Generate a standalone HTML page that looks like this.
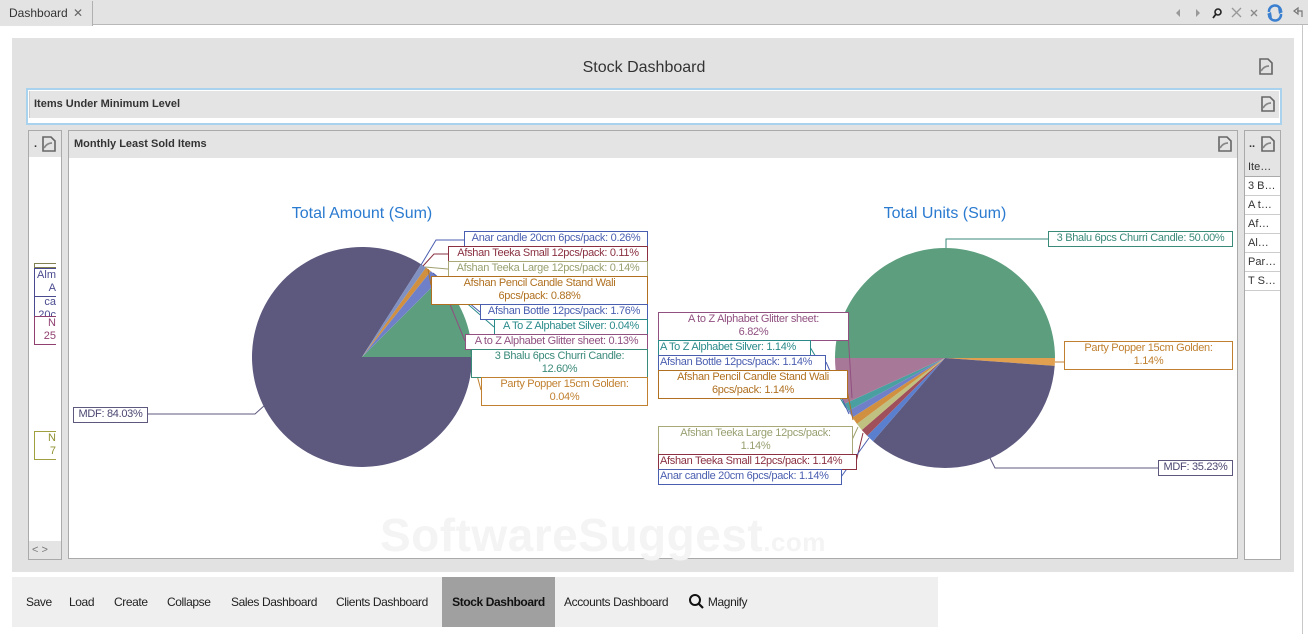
<!DOCTYPE html>
<html><head><meta charset="utf-8">
<style>
*{box-sizing:border-box;margin:0;padding:0}
body{width:1308px;height:634px;overflow:hidden;background:#fff;font-family:"Liberation Sans",sans-serif;position:relative}
.abs{position:absolute}
.lbl{position:absolute;background:#fff;border:1px solid;font-size:11px;line-height:13px;text-align:center;white-space:nowrap;overflow:hidden;padding:0 1px;letter-spacing:-0.3px}
.hdr{font-weight:bold;font-size:11px;color:#333}
.tb span{position:absolute;top:0;height:50px;line-height:50px;font-size:12px;color:#222;letter-spacing:-0.4px;white-space:nowrap}
</style></head><body>
<div class="abs" style="left:0;top:0;width:1308px;height:25px;background:#e3e3e3;border-bottom:1px solid #b8b8b8"></div>
<div class="abs" style="left:0;top:1px;width:93px;height:25px;background:#e3e3e3;border-right:1px solid #b0b0b0;font-size:12px;line-height:24px;padding-left:9px;color:#333;white-space:nowrap">Dashboard<span style="position:absolute;left:73px;top:0;color:#666;font-size:12px">✕</span></div>
<svg class="abs" style="left:1170px;top:4px" width="138" height="18">
<path d="M10 5 L6 9 L10 13Z" fill="#999"/><path d="M26 5 L30 9 L26 13Z" fill="#999"/>
<circle cx="48" cy="8" r="3" fill="none" stroke="#222" stroke-width="1.6"/><path d="M46 10 L43 14" stroke="#222" stroke-width="1.8"/>
<path d="M62 4 L71 13 M71 4 L62 13" stroke="#999" stroke-width="1.3"/>
<path d="M81 6 L87 12 M87 6 L81 12" stroke="#888" stroke-width="1.3"/>
<path d="M99 8 A6 6 0 0 1 111 7 M111 10 A6 6 0 0 1 99 11" fill="none" stroke="#3a7fd0" stroke-width="2.5"/><path d="M108 4 L113 8 L109 10Z M102 14 L97 10 L101 8Z" fill="#3a7fd0"/>
<path d="M124 7 L128 4 L128 10Z M127 7 L132 7 L132 13" fill="none" stroke="#777" stroke-width="1.2"/>
</svg>
<div class="abs" style="left:1302px;top:25px;width:1px;height:609px;background:#c8c8c8"></div>
<div class="abs" style="left:12px;top:38px;width:1282px;height:534px;background:#e2e2e2"></div>
<div class="abs" style="left:0;top:59px;width:1280px;text-align:center;font-size:16px;color:#333;padding-left:8px">Stock Dashboard</div>
<svg class="abs" style="left:1258px;top:58px" width="16" height="18"><path d="M2 1 H10 L14 5 V16 H2Z" fill="none" stroke="#666" stroke-width="1.6"/><path d="M3 13 Q6 8 11 8" stroke="#888" stroke-width="1.8" fill="none"/></svg>
<div class="abs" style="left:26px;top:88px;width:1256px;height:37px;border:2px solid #a9d2ee;background:#fff"></div>
<div class="abs" style="left:29px;top:91px;width:1250px;height:27px;background:#e4e4e4;border-left:1px solid #ccc"></div>
<div class="abs hdr" style="left:34px;top:98px">Items Under Minimum Level</div>
<svg class="abs" style="left:1260px;top:96px" width="16" height="16"><path d="M2 1 H10 L14 5 V15 H2Z" fill="none" stroke="#666" stroke-width="1.6"/><path d="M3 12 Q6 7 11 7" stroke="#888" stroke-width="1.8" fill="none"/></svg>
<div class="abs" style="left:28px;top:130px;width:34px;height:430px;border:1px solid #aaa;background:#fff"></div>
<div class="abs" style="left:29px;top:131px;width:32px;height:26px;background:#e4e4e4"></div>
<div class="abs hdr" style="left:34px;top:138px">.</div>
<svg class="abs" style="left:41px;top:136px" width="16" height="16"><path d="M2 1 H10 L14 5 V15 H2Z" fill="none" stroke="#666" stroke-width="1.6"/><path d="M3 12 Q6 7 11 7" stroke="#888" stroke-width="1.8" fill="none"/></svg>
<div class="abs" style="left:34px;top:268px;width:22px;height:29px;border:1px solid #4a4a90;border-right:none;font-size:11px;color:#4a4a90;overflow:hidden;text-align:right;line-height:13px">Alm<br>A</div>
<div class="abs" style="left:34px;top:263px;width:22px;height:5px;border:1px solid #808050;border-right:none"></div>
<div class="abs" style="left:34px;top:296px;width:22px;height:20px;border-left:1px solid #4a4a90;font-size:11px;color:#4a4a90;overflow:hidden;text-align:right;line-height:13px">ca<br>20c</div>
<div class="abs" style="left:34px;top:316px;width:22px;height:29px;border:1px solid #904070;border-right:none;font-size:11px;color:#904070;overflow:hidden;text-align:right;line-height:13px">N<br>25</div>
<div class="abs" style="left:34px;top:431px;width:22px;height:29px;border:1px solid #a0a040;border-right:none;font-size:11px;color:#909030;overflow:hidden;text-align:right;line-height:13px">N<br>7</div>
<div class="abs" style="left:29px;top:541px;width:32px;height:18px;background:#e4e4e4;font-size:11px;color:#777;line-height:18px;padding-left:3px">&lt; &gt;</div>
<div class="abs" style="left:1244px;top:130px;width:37px;height:430px;border:1px solid #aaa;background:#fff"></div>
<div class="abs" style="left:1245px;top:131px;width:35px;height:46px;background:#e4e4e4;border-bottom:1px solid #aaa"></div>
<div class="abs hdr" style="left:1249px;top:138px">..</div>
<svg class="abs" style="left:1260px;top:136px" width="16" height="16"><path d="M2 1 H10 L14 5 V15 H2Z" fill="none" stroke="#666" stroke-width="1.6"/><path d="M3 12 Q6 7 11 7" stroke="#888" stroke-width="1.8" fill="none"/></svg>
<div class="abs" style="left:1248px;top:161px;font-size:11px;color:#333">Ite…</div>
<div class="abs" style="left:1245px;top:177px;width:35px;font-size:11px;color:#333;line-height:18px">
<div style="border-bottom:1px solid #ccc;padding-left:3px;height:19px">3 B…</div>
<div style="border-bottom:1px solid #ccc;padding-left:3px;height:19px">A t…</div>
<div style="border-bottom:1px solid #ccc;padding-left:3px;height:19px">Af…</div>
<div style="border-bottom:1px solid #ccc;padding-left:3px;height:19px">Al…</div>
<div style="border-bottom:1px solid #ccc;padding-left:3px;height:19px">Par…</div>
<div style="border-bottom:1px solid #ccc;padding-left:3px;height:19px">T S…</div>
</div>
<div class="abs" style="left:68px;top:130px;width:1170px;height:429px;border:1px solid #aaa;background:#fff"></div>
<div class="abs" style="left:69px;top:131px;width:1168px;height:27px;background:#e4e4e4"></div>
<div class="abs hdr" style="left:74px;top:138px">Monthly Least Sold Items</div>
<svg class="abs" style="left:1217px;top:136px" width="16" height="16"><path d="M2 1 H10 L14 5 V15 H2Z" fill="none" stroke="#666" stroke-width="1.6"/><path d="M3 12 Q6 7 11 7" stroke="#888" stroke-width="1.8" fill="none"/></svg>
<div class="abs" style="left:380px;top:508px;font-size:46px;font-weight:bold;color:#f4f4f4;letter-spacing:0.5px;white-space:nowrap">SoftwareSuggest<span style="font-size:26px">.com</span></div>
<div class="abs" style="left:212px;top:205px;width:300px;text-align:center;font-size:16px;color:#2a7ad0">Total Amount (Sum)</div>
<div class="abs" style="left:795px;top:205px;width:300px;text-align:center;font-size:16px;color:#2a7ad0">Total Units (Sum)</div>
<svg class="abs" style="left:0;top:0" width="1308" height="634">
<path d="M362 357 L472 357 A110 110 0 1 1 421.1 264.2 Z" fill="#5c587e"/>
<path d="M362 357 L439.8 279.2 A110 110 0 0 1 472 357 Z" fill="#5c9e7e"/>
<path d="M362 357 L430.8 271.1 A110 110 0 0 1 439.8 279.2 Z" fill="#7080c8"/>
<path d="M362 357 L425.9 267.5 A110 110 0 0 1 430.8 271.1 Z" fill="#d09040"/>
<path d="M362 357 L421.1 264.2 A110 110 0 0 1 425.9 267.5 Z" fill="#8090c0"/>
<g fill="none" stroke-width="1">
<path d="M421 265 L436 240 L464 240" stroke="#4a5eb0"/>
<path d="M423 266 L434 254 L448 254" stroke="#8a3040"/>
<path d="M425 267 L448 269" stroke="#a0a070"/>
<path d="M428 269 L431 285" stroke="#b07020"/>
<path d="M433 273 L480 312" stroke="#4a5eb0"/>
<path d="M438 278 L494 327" stroke="#2a8a8a"/>
<path d="M440 280 L465 341" stroke="#905080"/>
<path d="M470 340 L472 362" stroke="#3a8a7a"/>
<path d="M472 357 L481 390" stroke="#c08030"/>
<path d="M147 414 L255 414 L265 405" stroke="#5c587e"/>
</g>
<path d="M945 358 L835 358 A110 110 0 0 1 1055 358 Z" fill="#5c9e7e"/>
<path d="M945 358 L1055 358 A110 110 0 0 1 1054.7 365.9 Z" fill="#e0a050"/>
<path d="M945 358 L1054.7 365.9 A110 110 0 0 1 873 441.2 Z" fill="#5c587e"/>
<path d="M945 358 L873 441.2 A110 110 0 0 1 867.2 435.8 Z" fill="#5b7fcf"/>
<path d="M945 358 L867.2 435.8 A110 110 0 0 1 861.8 430 Z" fill="#a0505a"/>
<path d="M945 358 L861.8 430 A110 110 0 0 1 856.9 423.9 Z" fill="#c0c080"/>
<path d="M945 358 L856.9 423.9 A110 110 0 0 1 852.5 417.4 Z" fill="#d09040"/>
<path d="M945 358 L852.5 417.4 A110 110 0 0 1 848.4 410.7 Z" fill="#7080c8"/>
<path d="M945 358 L848.4 410.7 A110 110 0 0 1 844.9 403.6 Z" fill="#4aa0a0"/>
<path d="M945 358 L844.9 403.6 A110 110 0 0 1 835 358 Z" fill="#a87898"/>
<g fill="none" stroke-width="1">
<path d="M946 248 L946 239 L1048 239" stroke="#3a8a7a"/>
<path d="M1055 362 L1064 362" stroke="#c08030"/>
<path d="M990 458 L995 468 L1158 468" stroke="#5c587e"/>
<path d="M848 332 L852 398" stroke="#905080"/>
<path d="M810 347 L846 408" stroke="#2a8a8a"/>
<path d="M826 362 L849 414" stroke="#4a5eb0"/>
<path d="M847 390 L853 420" stroke="#b07020"/>
<path d="M852 440 L858 427" stroke="#a0a070"/>
<path d="M856 462 L863 433" stroke="#8a3040"/>
<path d="M841 477 L869 438" stroke="#4a5eb0"/>
</g>
</svg>
<div class="lbl" style="left:464px;top:231px;width:184px;height:16px;border-color:#4a5eb0;color:#4a5eb0">Anar candle 20cm 6pcs/pack: 0.26%</div>
<div class="lbl" style="left:448px;top:246px;width:200px;height:16px;border-color:#8a3040;color:#8a3040">Afshan Teeka Small 12pcs/pack: 0.11%</div>
<div class="lbl" style="left:448px;top:261px;width:200px;height:16px;border-color:#a8a878;color:#98a070">Afshan Teeka Large 12pcs/pack: 0.14%</div>
<div class="lbl" style="left:431px;top:276px;width:217px;height:29px;border-color:#b07020;color:#b07020">Afshan Pencil Candle Stand Wali<br>6pcs/pack: 0.88%</div>
<div class="lbl" style="left:480px;top:304px;width:168px;height:16px;border-color:#4a5eb0;color:#4a5eb0">Afshan Bottle 12pcs/pack: 1.76%</div>
<div class="lbl" style="left:494px;top:319px;width:154px;height:16px;border-color:#2a8a8a;color:#2a8a8a">A To Z Alphabet Silver: 0.04%</div>
<div class="lbl" style="left:465px;top:334px;width:183px;height:16px;border-color:#905080;color:#905080">A to Z Alphabet Glitter sheet: 0.13%</div>
<div class="lbl" style="left:471px;top:349px;width:177px;height:29px;border-color:#3a8a7a;color:#3a8a7a">3 Bhalu 6pcs Churri Candle:<br>12.60%</div>
<div class="lbl" style="left:481px;top:377px;width:167px;height:29px;border-color:#c08030;color:#c08030">Party Popper 15cm Golden:<br>0.04%</div>
<div class="lbl" style="left:73px;top:407px;width:75px;height:16px;border-color:#5c587e;color:#4a4670">MDF: 84.03%</div>
<div class="lbl" style="left:1048px;top:231px;width:185px;height:16px;border-color:#3a8a7a;color:#3a8a7a">3 Bhalu 6pcs Churri Candle: 50.00%</div>
<div class="lbl" style="left:1064px;top:341px;width:169px;height:29px;border-color:#c08030;color:#c08030">Party Popper 15cm Golden:<br>1.14%</div>
<div class="lbl" style="left:658px;top:312px;width:191px;height:29px;border-color:#905080;color:#905080">A to Z Alphabet Glitter sheet:<br>6.82%</div>
<div class="lbl" style="left:658px;top:340px;width:153px;height:16px;border-color:#2a8a8a;color:#2a8a8a;text-align:left">A To Z Alphabet Silver: 1.14%</div>
<div class="lbl" style="left:658px;top:355px;width:168px;height:16px;border-color:#4a5eb0;color:#4a5eb0;text-align:left">Afshan Bottle 12pcs/pack: 1.14%</div>
<div class="lbl" style="left:658px;top:370px;width:190px;height:29px;border-color:#b07020;color:#b07020">Afshan Pencil Candle Stand Wali<br>6pcs/pack: 1.14%</div>
<div class="lbl" style="left:658px;top:426px;width:195px;height:29px;border-color:#a8a878;color:#98a070">Afshan Teeka Large 12pcs/pack:<br>1.14%</div>
<div class="lbl" style="left:658px;top:454px;width:199px;height:16px;border-color:#8a3040;color:#8a3040;text-align:left">Afshan Teeka Small 12pcs/pack: 1.14%</div>
<div class="lbl" style="left:658px;top:469px;width:184px;height:16px;border-color:#4a5eb0;color:#4a5eb0;text-align:left">Anar candle 20cm 6pcs/pack: 1.14%</div>
<div class="lbl" style="left:1158px;top:460px;width:75px;height:16px;border-color:#5c587e;color:#4a4670">MDF: 35.23%</div>
<div class="abs tb" style="left:12px;top:577px;width:926px;height:50px;background:#efefef">
<span style="left:14px">Save</span>
<span style="left:57px">Load</span>
<span style="left:102px">Create</span>
<span style="left:155px">Collapse</span>
<span style="left:219px">Sales Dashboard</span>
<span style="left:324px">Clients Dashboard</span>
<span style="left:430px;width:113px;background:#a0a0a0;font-weight:bold;text-align:center;color:#111">Stock Dashboard</span>
<span style="left:552px">Accounts Dashboard</span>
<span style="left:676px"><svg width="17" height="17" style="vertical-align:-4px"><circle cx="7" cy="7" r="5" fill="none" stroke="#111" stroke-width="2"/><path d="M10.5 10.5 L15 15" stroke="#111" stroke-width="2.2"/></svg> Magnify</span>
</div>
</body></html>
